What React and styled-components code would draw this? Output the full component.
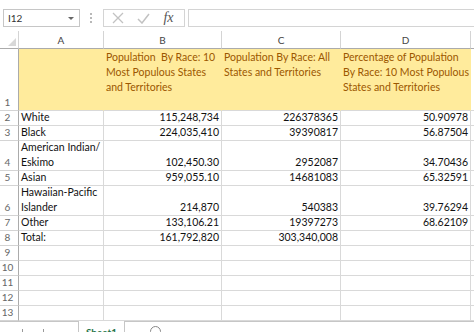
import React from 'react';
import styled, { createGlobalStyle } from 'styled-components';

const GlobalStyle = createGlobalStyle`
  html, body {
    margin: 0;
    padding: 0;
    background: #ffffff;
  }
  body {
    font-family: Lato, "Liberation Sans", sans-serif;
  }
`;

const Window = styled.div`
  width: 474px;
  height: 332px;
  overflow: hidden;
  display: flex;
  flex-direction: column;
  background: #ffffff;
`;

const FormulaBar = styled.div`
  height: 31px;
  box-sizing: border-box;
  padding: 9px 0 0 3px;
  display: flex;
  align-items: flex-start;
  flex-shrink: 0;
`;

const NameBox = styled.div`
  width: 77px;
  height: 18px;
  box-sizing: border-box;
  border: 1px solid #c6c6c6;
  display: flex;
  align-items: center;
  justify-content: space-between;
  padding: 0 5px 0 4px;
  font-size: 10px;
  color: #333;
`;

const DropArrow = styled.span`
  width: 0;
  height: 0;
  border-left: 3px solid transparent;
  border-right: 3px solid transparent;
  border-top: 3px solid #666;
`;

const Grip = styled.div`
  width: 2px;
  height: 12px;
  margin: 3px 11px 0 10px;
  background-image: radial-gradient(circle, #b8b8b8 0.8px, transparent 1px);
  background-size: 2px 4px;
`;

const ButtonBox = styled.div`
  width: 82px;
  height: 18px;
  box-sizing: border-box;
  border: 1px solid #d4d4d4;
  display: flex;
  align-items: center;
  justify-content: space-around;
  padding: 0 4px 0 2px;
`;

const Fx = styled.span`
  font-family: "Liberation Serif", "DejaVu Serif", serif;
  font-style: italic;
  font-size: 14px;
  color: #555;
  line-height: 1;
`;

const FormulaInput = styled.div`
  flex: 1;
  height: 18px;
  margin-left: 3px;
  box-sizing: border-box;
  border: 1px solid #d4d4d4;
  border-right: none;
`;

const Sheet = styled.div`
  display: grid;
  grid-template-columns: 19px 85px 118px 119px 130px 1fr;
  grid-template-rows: 18px 62px 15px 15px 30px 15px 30px repeat(7, 15px);
  font-size: 10.5px;
  line-height: 15px;
  flex-shrink: 0;
`;

const CornerCell = styled.div`
  position: relative;
  border-right: 1px solid #d4d4d4;
  border-bottom: 1px solid #ababab;
  box-sizing: border-box;

  &::after {
    content: '';
    position: absolute;
    right: 2px;
    bottom: 2px;
    width: 0;
    height: 0;
    border-left: 8px solid transparent;
    border-bottom: 8px solid #d8d8d8;
  }
`;

const ColHead = styled.div`
  box-sizing: border-box;
  border-right: 1px solid #d4d4d4;
  border-bottom: 1px solid #ababab;
  display: flex;
  align-items: center;
  justify-content: center;
  color: #444;
  font-size: 10px;
  padding-top: 1px;
`;

const RowHead = styled.div`
  box-sizing: border-box;
  border-right: 1px solid #ababab;
  border-bottom: 1px solid #d4d4d4;
  display: flex;
  align-items: flex-end;
  justify-content: center;
  color: #666;
  font-size: 10px;
  padding-right: 3px;
`;

const Cell = styled.div`
  box-sizing: border-box;
  border-right: 1px solid ${({ $fill }) => ($fill ? $fill : '#d9d9d9')};
  border-bottom: 1px solid #d9d9d9;
  background: ${({ $fill }) => $fill || 'transparent'};
  color: ${({ $ink }) => $ink || '#111'};
  display: flex;
  flex-direction: column;
  justify-content: ${({ $top }) => ($top ? 'flex-start' : 'flex-end')};
  text-align: ${({ $align }) => $align || 'left'};
  padding: ${({ $top }) => ($top ? '1px 2px 0' : '0 2px')};
  white-space: pre;
  overflow: visible;
  min-width: 0;
`;

const TabBar = styled.div`
  flex: 1;
  border-top: 1px solid #c6c6c6;
  background: #ffffff;
  display: flex;
  align-items: flex-start;
  position: relative;
`;

const NavMark = styled.span`
  width: 0;
  height: 0;
  margin-top: 7px;
  border-left: 1px solid #999;
  height: 4px;
  margin-left: ${({ $gap }) => $gap}px;
`;

const SheetTab = styled.div`
  margin-left: 34px;
  width: 47px;
  height: 12px;
  box-sizing: border-box;
  border-left: 1px solid #c6c6c6;
  border-right: 1px solid #c6c6c6;
  margin-top: -1px;
  background: #ffffff;
  color: #217346;
  font-weight: 700;
  font-size: 10px;
  text-align: center;
  padding-top: 5px;
  line-height: 12px;
`;

const AddSheet = styled.span`
  margin-left: 25px;
  margin-top: 4px;
  width: 11px;
  height: 11px;
  box-sizing: border-box;
  border: 1px solid #888;
  border-radius: 50%;
`;

const YELLOW = '#ffeb9c';
const BROWN = '#9c5700';

const rows = [
  { n: 1, head: true, a: '', b: 'Population  By Race: 10\nMost Populous States\nand Territories', c: 'Population By Race: All\nStates and Territories', d: 'Percentage of Population\nBy Race: 10 Most Populous\nStates and Territories' },
  { n: 2, a: 'White', b: '115,248,734', c: '226378365', d: '50.90978' },
  { n: 3, a: 'Black', b: '224,035,410', c: '39390817', d: '56.87504' },
  { n: 4, a: 'American Indian/\nEskimo', b: '102,450.30', c: '2952087', d: '34.70436' },
  { n: 5, a: 'Asian', b: '959,055.10', c: '14681083', d: '65.32591' },
  { n: 6, a: 'Hawaiian-Pacific\nIslander', b: '214,870', c: '540383', d: '39.76294' },
  { n: 7, a: 'Other', b: '133,106.21', c: '19397273', d: '68.62109' },
  { n: 8, a: 'Total:', b: '161,792,820', c: '303,340,008', d: '' },
  { n: 9 }, { n: 10 }, { n: 11 }, { n: 12 }, { n: 13 },
];

const Cross = () => (
  <svg width="12" height="12" viewBox="0 0 12 12">
    <path d="M1 1 L11 11 M11 1 L1 11" stroke="#c2c2c2" strokeWidth="1.3" fill="none" />
  </svg>
);

const Check = () => (
  <svg width="13" height="11" viewBox="0 0 13 11">
    <path d="M1 6 L5 10 L12 1" stroke="#c2c2c2" strokeWidth="1.5" fill="none" />
  </svg>
);

const App = () => (
  <Window>
    <GlobalStyle />
    <FormulaBar>
      <NameBox>
        I12
        <DropArrow />
      </NameBox>
      <Grip />
      <ButtonBox>
        <Cross />
        <Check />
        <Fx>fx</Fx>
      </ButtonBox>
      <FormulaInput />
    </FormulaBar>

    <Sheet>
      <CornerCell />
      {['A', 'B', 'C', 'D', ''].map((l, i) => (
        <ColHead key={i}>{l}</ColHead>
      ))}
      {rows.map((r) => {
        const fill = r.head ? YELLOW : null;
        const ink = r.head ? BROWN : null;
        return (
          <React.Fragment key={r.n}>
            <RowHead>{r.n}</RowHead>
            <Cell $fill={fill} $ink={ink} $top={r.head}>{r.a}</Cell>
            <Cell $fill={fill} $ink={ink} $top={r.head} $align={r.head ? 'left' : 'right'}>{r.b}</Cell>
            <Cell $fill={fill} $ink={ink} $top={r.head} $align={r.head ? 'left' : 'right'}>{r.c}</Cell>
            <Cell $fill={fill} $ink={ink} $top={r.head} $align={r.head ? 'left' : 'right'}>{r.d}</Cell>
            <Cell />
          </React.Fragment>
        );
      })}
    </Sheet>

    <TabBar>
      <NavMark $gap={22} />
      <NavMark $gap={20} />
      <SheetTab>Sheet1</SheetTab>
      <AddSheet />
    </TabBar>
  </Window>
);

export default App;
